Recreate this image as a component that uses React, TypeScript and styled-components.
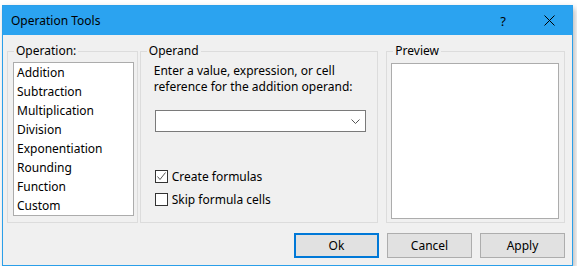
import React from "react";
import styled, { createGlobalStyle } from "styled-components";

const Global = createGlobalStyle`
  html, body { margin: 0; padding: 0; background: #ffffff; }
  body { font-family: "Noto Sans", "Segoe UI", Arial, sans-serif; font-size: 12px; color: #000; }
  * { box-sizing: border-box; }
`;

const Page = styled.div`
  padding: 5px 0 0 2px;
`;

const Window = styled.div`
  width: 571px;
  height: 261px;
  border: 1px solid #2b9fe9;
  background: #f0f0f0;
  display: flex;
  flex-direction: column;
  box-shadow: 2px 3px 6px rgba(0, 0, 0, 0.28);
`;

const TitleBar = styled.div`
  height: 29px;
  background: #2ba3f0;
  display: flex;
  align-items: center;
  padding-left: 8px;
  flex-shrink: 0;
`;

const Title = styled.div`
  flex: 1;
  font-size: 12px;
  line-height: 16px;
  margin-top: 1px;
`;

const TitleButton = styled.div`
  width: 46px;
  height: 29px;
  display: flex;
  align-items: center;
  justify-content: center;
  font-size: 13px;
`;

const Body = styled.div`
  flex: 1;
  display: flex;
  flex-direction: column;
  padding: 8px 7px 0 4px;
`;

const Groups = styled.div`
  display: flex;
  height: 180px;
`;

const Group = styled.fieldset<{ $w: number; $ml: number }>`
  margin: 0 0 0 ${(p) => p.$ml}px;
  padding: 0;
  width: ${(p) => p.$w}px;
  min-width: 0;
  border: 1px solid #dcdcdc;
  display: flex;
  flex-direction: column;
`;

const Legend = styled.legend`
  margin-left: 6px;
  padding: 0 2px;
  font-size: 12px;
  line-height: 16px;
`;

const GroupInner = styled.div<{ $pad: string }>`
  padding: ${(p) => p.$pad};
  display: flex;
  flex-direction: column;
`;

const ListBox = styled.div`
  width: 121px;
  height: 154px;
  background: #fff;
  border: 1px solid #acacac;
  display: flex;
  flex-direction: column;
`;

const ListItem = styled.div`
  height: 19px;
  line-height: 19px;
  padding-left: 3px;
  font-size: 12px;
  white-space: nowrap;
`;

const Prompt = styled.div`
  font-size: 12px;
  line-height: 16px;
`;

const Combo = styled.div`
  margin: 15px 0 0 1px;
  width: 211px;
  height: 22px;
  background: #fff;
  border: 1px solid #7a7a7a;
  display: flex;
  align-items: center;
  justify-content: flex-end;
  padding-right: 5px;
`;

const CheckRow = styled.label<{ $mt: number }>`
  display: flex;
  align-items: center;
  margin: ${(p) => p.$mt}px 0 0 1px;
  height: 13px;
  gap: 4px;
  font-size: 12px;
`;

const Box = styled.span`
  width: 13px;
  height: 13px;
  border: 1px solid #333;
  background: #fff;
  display: flex;
  align-items: center;
  justify-content: center;
`;

const PreviewBox = styled.div`
  width: 168px;
  height: 156px;
  background: #fff;
  border: 1px solid #acacac;
`;

const Buttons = styled.div`
  display: flex;
  justify-content: flex-end;
  gap: 8px;
  margin-top: 10px;
`;

const Button = styled.button<{ $default?: boolean }>`
  width: 85px;
  height: 25px;
  background: #e1e1e1;
  border: ${(p) => (p.$default ? "2px solid #0078d7" : "1px solid #adadad")};
  font-family: inherit;
  font-size: 12px;
  color: #000;
  padding: 0;
`;

const ops = [
  "Addition",
  "Subtraction",
  "Multiplication",
  "Division",
  "Exponentiation",
  "Rounding",
  "Function",
  "Custom",
];

export default function App() {
  return (
    <>
      <Global />
      <Page>
        <Window>
          <TitleBar>
            <Title>Operation Tools</Title>
            <TitleButton>?</TitleButton>
            <TitleButton>
              <svg width="11" height="11" viewBox="0 0 11 11">
                <path d="M0.5 0.5 L10.5 10.5 M10.5 0.5 L0.5 10.5" stroke="#000" strokeWidth="1" />
              </svg>
            </TitleButton>
          </TitleBar>
          <Body>
            <Groups>
              <Group $w={131} $ml={0}>
                <Legend>Operation:</Legend>
                <GroupInner $pad="3px 0 0 5px">
                  <ListBox>
                    {ops.map((o) => (
                      <ListItem key={o}>{o}</ListItem>
                    ))}
                  </ListBox>
                </GroupInner>
              </Group>
              <Group $w={239} $ml={2}>
                <Legend>Operand</Legend>
                <GroupInner $pad="4px 0 0 13px">
                  <Prompt>
                    Enter a value, expression, or cell
                    <br />
                    reference for the addition operand:
                  </Prompt>
                  <Combo>
                    <svg width="9" height="5" viewBox="0 0 9 5">
                      <path d="M0.5 0.5 L4.5 4.5 L8.5 0.5" fill="none" stroke="#555" strokeWidth="1" />
                    </svg>
                  </Combo>
                  <CheckRow $mt={38}>
                    <Box>
                      <svg width="11" height="11" viewBox="0 0 11 11">
                        <path d="M1.5 5.5 L4 8.5 L9.5 1.5" fill="none" stroke="#555" strokeWidth="1" />
                      </svg>
                    </Box>
                    Create formulas
                  </CheckRow>
                  <CheckRow $mt={10}>
                    <Box />
                    Skip formula cells
                  </CheckRow>
                </GroupInner>
              </Group>
              <Group $w={179} $ml={8}>
                <Legend>Preview</Legend>
                <GroupInner $pad="4px 0 0 4px">
                  <PreviewBox />
                </GroupInner>
              </Group>
            </Groups>
            <Buttons>
              <Button $default>Ok</Button>
              <Button>Cancel</Button>
              <Button>Apply</Button>
            </Buttons>
          </Body>
        </Window>
      </Page>
    </>
  );
}
